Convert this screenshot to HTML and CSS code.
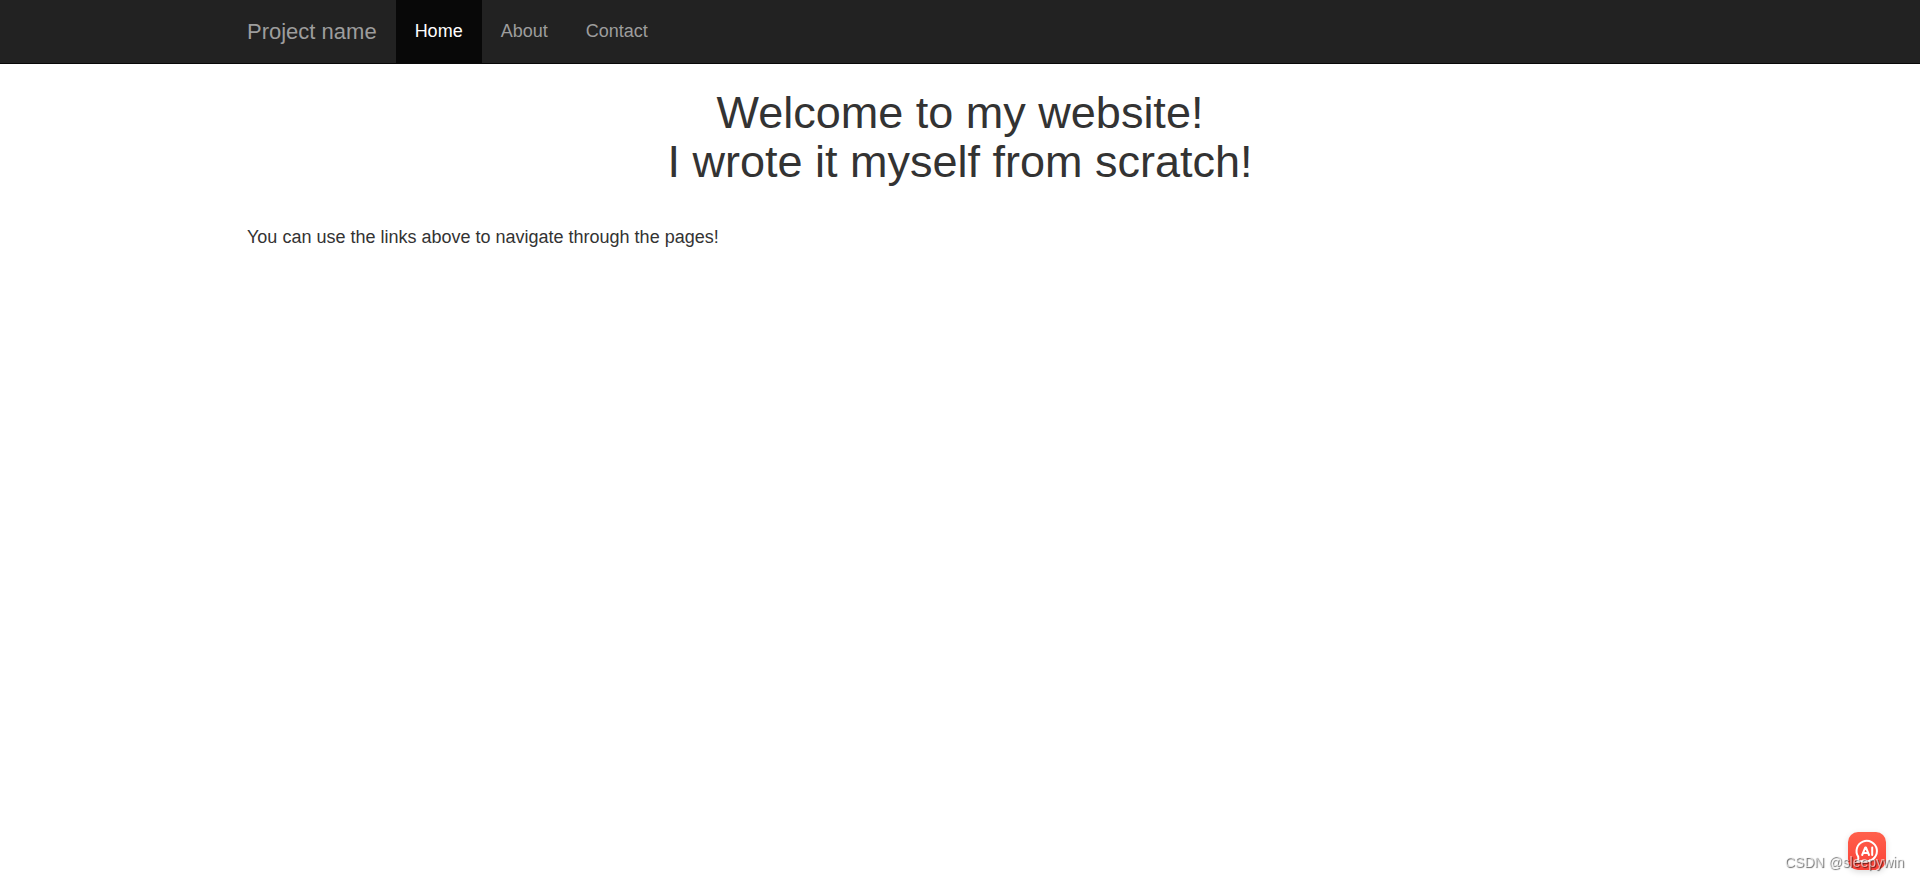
FILE: index.html
```html
<!DOCTYPE html>
<html lang="en">
<head>
<meta charset="utf-8">
<title>Project name</title>
<link rel="stylesheet" href="styles.css">
</head>
<body>
<nav class="navbar">
  <div class="container navbar-inner">
    <a class="brand" href="#">Project name</a>
    <ul class="nav-list">
      <li><a class="nav-link active" href="#" aria-current="page">Home</a></li>
      <li><a class="nav-link" href="#about">About</a></li>
      <li><a class="nav-link" href="#contact">Contact</a></li>
    </ul>
  </div>
</nav>
<main class="container">
  <h1 class="title">Welcome to my website!<br>I wrote it myself from scratch!</h1>
  <p class="lead">You can use the links above to navigate through the pages!</p>
</main>
<button class="assistant" type="button" aria-label="AI assistant">
  <svg class="assistant-icon" viewBox="0 0 38 38" aria-hidden="true">
    <path d="M10.2 24.6A10.2 10.2 0 1 1 18.7 29.2H9.2C10.4 27.8 10.8 26.4 10.2 24.6Z" fill="none" stroke="#fff" stroke-width="2" stroke-linejoin="round"/>
    <path d="M14.2 23 17.3 15.4H17.9L21 23M15.4 21H19.9M24.2 15.4V23" fill="none" stroke="#fff" stroke-width="2" stroke-linecap="round" stroke-linejoin="round"/>
  </svg>
</button>
<div class="watermark">CSDN @sleepywin</div>
</body>
</html>
```
FILE: styles.css
```css
* {
  box-sizing: border-box;
}

body {
  margin: 0;
  background: #fff;
  color: #333;
  font-family: "Liberation Sans", Arial, sans-serif;
  font-size: 18px;
  line-height: 25px;
}

.container {
  max-width: 1464px;
  margin: 0 auto;
  padding: 0 19px;
}

.navbar {
  background: #222;
  border-bottom: 1px solid #080808;
}

.navbar-inner {
  display: flex;
}

.brand,
.nav-link {
  display: block;
  padding: 19px;
  color: #9d9d9d;
  text-decoration: none;
}

.brand {
  margin-left: -19px;
  font-size: 22px;
}

.nav-list {
  display: flex;
  margin: 0;
  padding: 0;
  list-style: none;
}

.nav-link.active {
  background: #080808;
  color: #fff;
}

.title {
  margin: 24px 0 39px;
  font-size: 45px;
  font-weight: 500;
  line-height: 49px;
  text-align: center;
}

.lead {
  margin: 0;
}

.assistant {
  position: fixed;
  right: 34px;
  bottom: 9px;
  width: 38px;
  height: 38px;
  padding: 0;
  border: 0;
  border-radius: 10px;
  background: linear-gradient(#ff604b, #fb4238);
  box-shadow: 0 2px 6px rgba(0, 0, 0, 0.14);
}

.assistant-icon {
  display: block;
  width: 100%;
}

.watermark {
  position: fixed;
  right: 16px;
  bottom: 8px;
  color: rgba(255, 255, 255, 0.6);
  font-size: 14px;
  line-height: 18px;
  text-shadow: 1px 1px 1px rgba(0, 0, 0, 0.6);
  pointer-events: none;
}
```
